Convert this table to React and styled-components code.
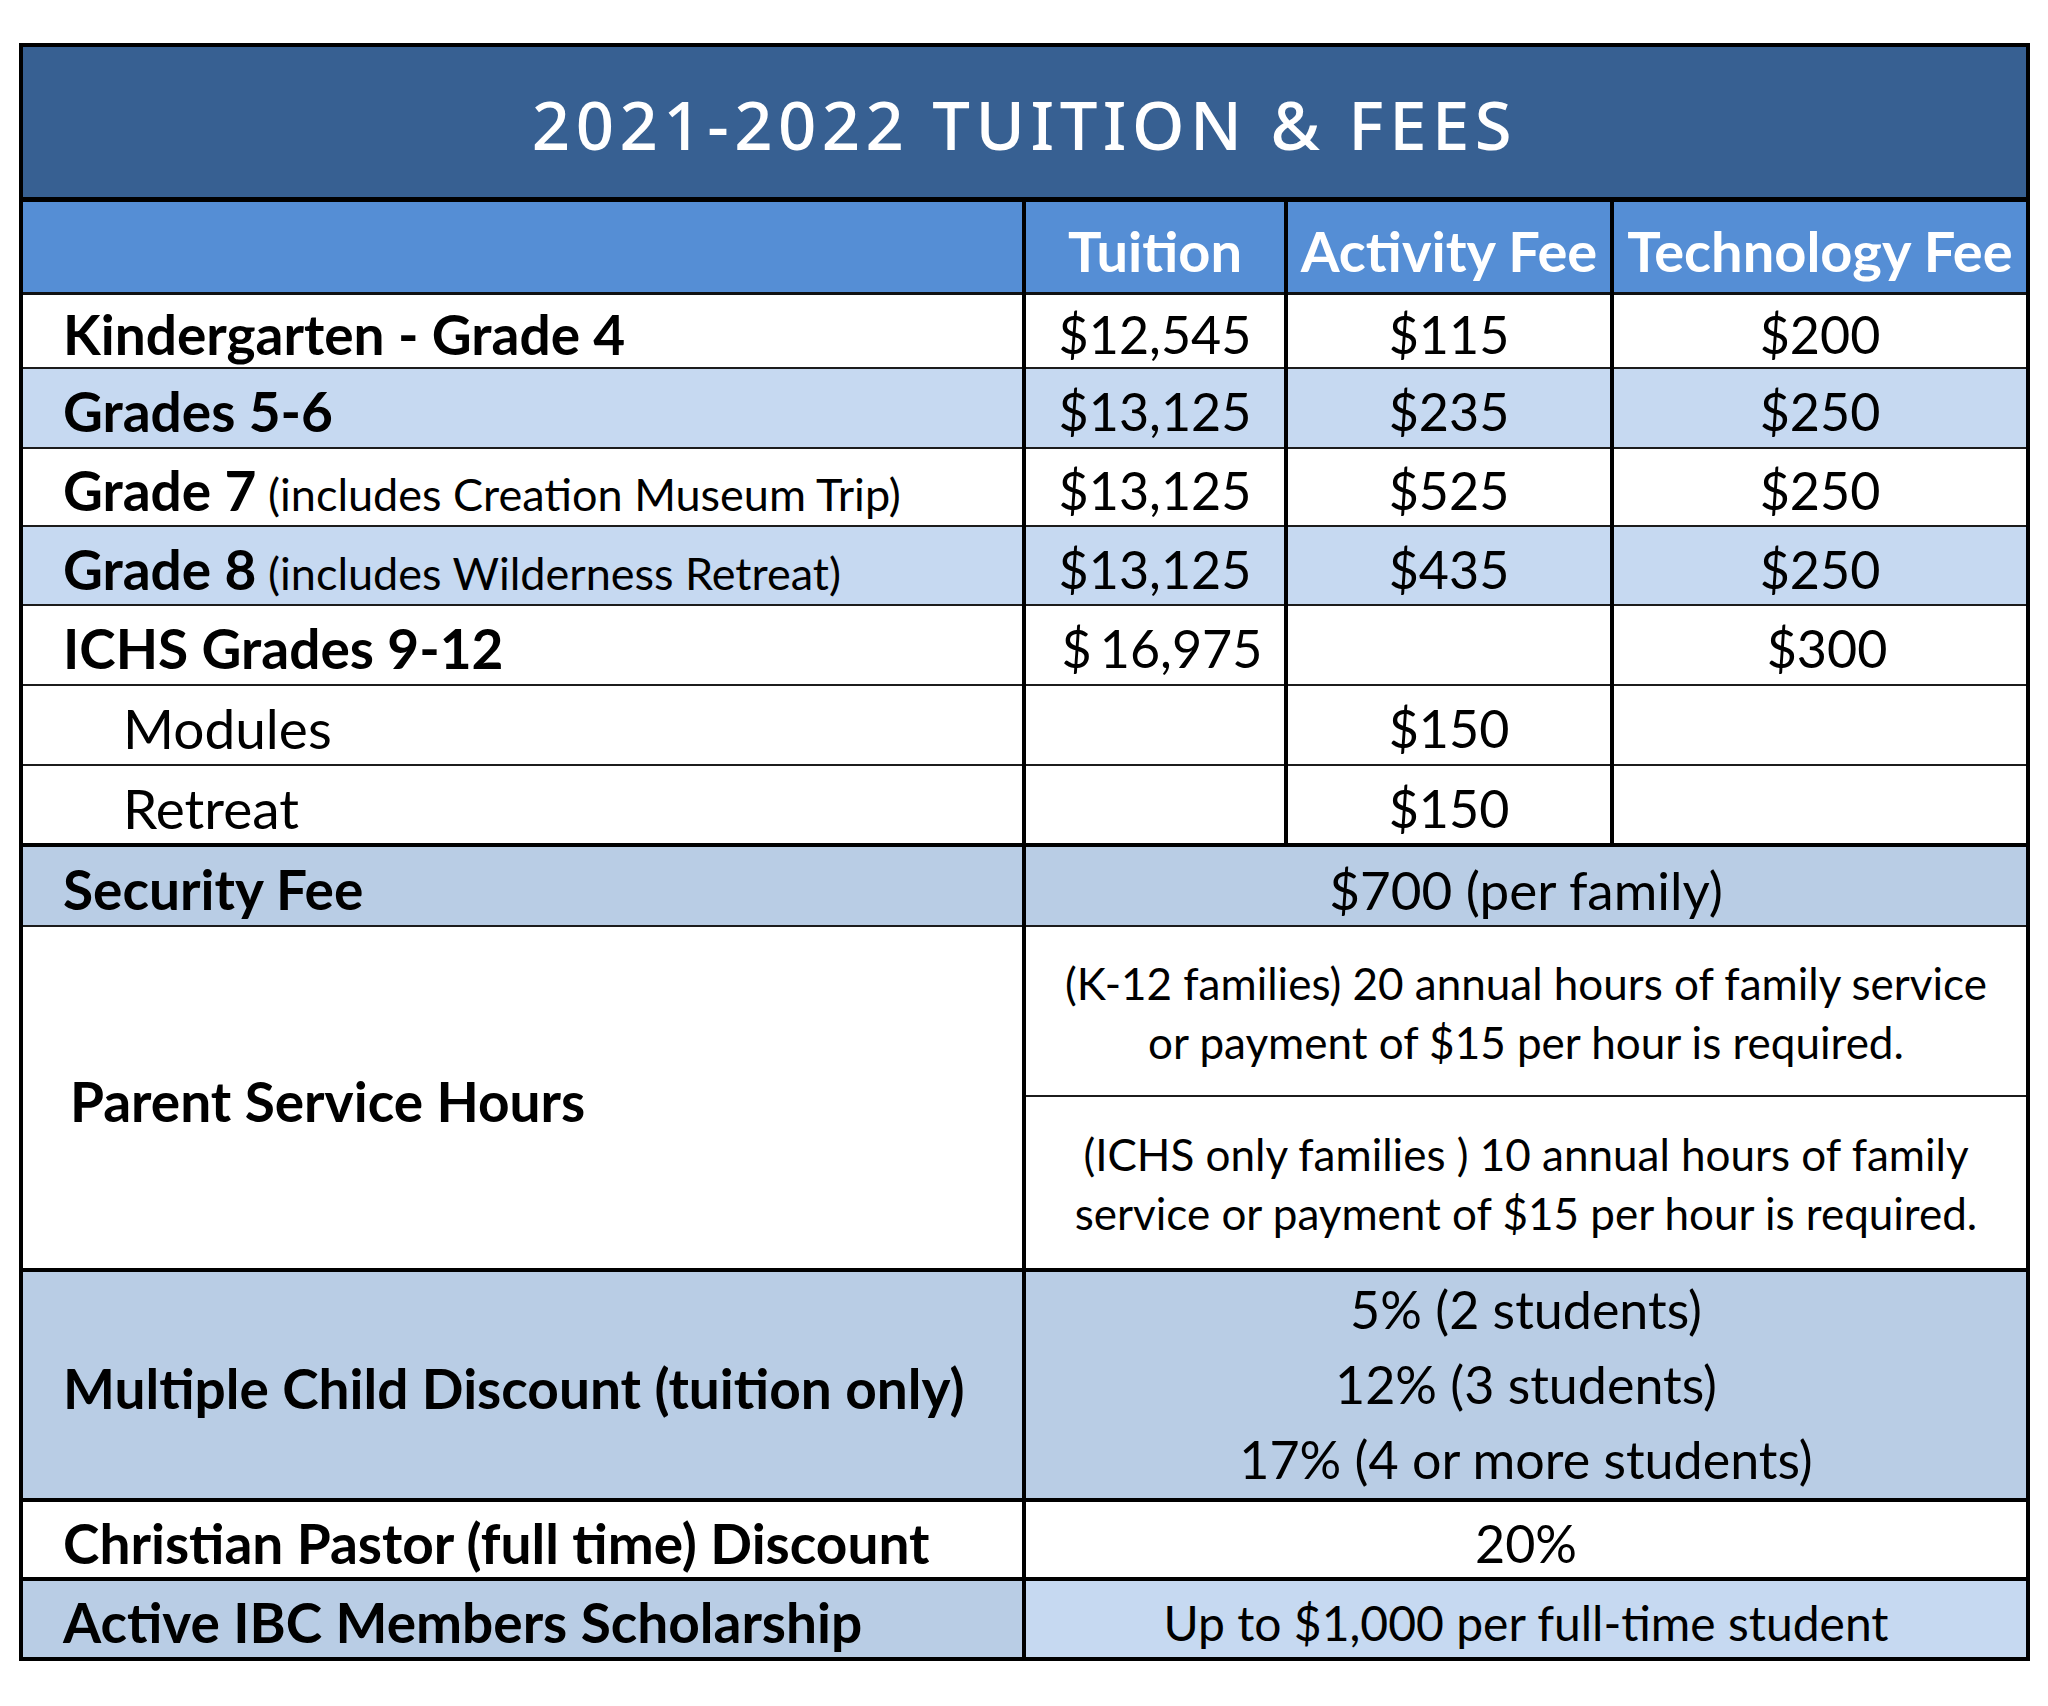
import React from 'react';
import styled, { createGlobalStyle } from 'styled-components';

const GlobalStyle = createGlobalStyle`
  body {
    margin: 0;
    background: #ffffff;
    font-family: Lato, "Open Sans", sans-serif;
    color: #000000;
  }
`;

const rows = [
  { label: 'Kindergarten - Grade 4', tuition: '$12,545', activity: '$115', tech: '$200', height: 70 },
  { label: 'Grades 5-6', tuition: '$13,125', activity: '$235', tech: '$250', height: 80, shade: true },
  { label: 'Grade 7', note: '(includes Creation Museum Trip)', tuition: '$13,125', activity: '$525', tech: '$250', height: 78 },
  { label: 'Grade 8', note: '(includes Wilderness Retreat)', tuition: '$13,125', activity: '$435', tech: '$250', height: 79, shade: true },
  { label: 'ICHS Grades 9-12', tuition: '$16,975', activity: '', tech: '$300', height: 80, odd: true },
  { label: 'Modules', tuition: '', activity: '$150', tech: '', height: 80, sub: true },
  { label: 'Retreat', tuition: '', activity: '$150', tech: '', height: 80, sub: true },
];

const App = () => {
  return (
    <Page>
      <GlobalStyle />
      <Table>
        <colgroup>
          <col style={{ width: 1003 }} />
          <col style={{ width: 262 }} />
          <col style={{ width: 326 }} />
          <col style={{ width: 416 }} />
        </colgroup>
        <tbody>
          <tr>
            <TitleCell colSpan={4}>2021-2022 TUITION &amp; FEES</TitleCell>
          </tr>
          <tr>
            <HeadCell />
            <HeadCell>Tuition</HeadCell>
            <HeadCell>Activity Fee</HeadCell>
            <HeadCell>Technology Fee</HeadCell>
          </tr>
          {rows.map((r) => (
            <Row key={r.label} $height={r.height} $bg={r.shade ? '#c6d9f1' : '#ffffff'}>
              <Label $indent={r.sub}>
                {r.label}
                {r.note && <Note> {r.note}</Note>}
              </Label>
              <Value $shift={r.odd ? 14 : 0}>
                {r.odd ? <><Dollar>$</Dollar>16,975</> : r.tuition}
              </Value>
              <Value>{r.activity}</Value>
              <Value $shift={r.odd ? 14 : 0}>{r.tech}</Value>
            </Row>
          ))}
          <Row $height={81} $bg="#b9cde5" $thick>
            <Label>Security Fee</Label>
            <Value colSpan={3} $size={53}>$700 (per family)</Value>
          </Row>
          <Row $height={170} $bg="#ffffff">
            <Label rowSpan={2} $pad={47}>Parent Service Hours</Label>
            <Small colSpan={3}>
              (K-12 families) 20 annual hours of family service
              <br />
              or payment of $15 per hour is required.
            </Small>
          </Row>
          <Row $height={174} $bg="#ffffff">
            <Small colSpan={3}>
              (ICHS only families ) 10 annual hours of family
              <br />
              service or payment of $15 per hour is required.
            </Small>
          </Row>
          <Row $height={228} $bg="#b9cde5" $thick>
            <Label>Multiple Child Discount (tuition only)</Label>
            <Stack colSpan={3}>
              <div>5% (2 students)</div>
              <div>12% (3 students)</div>
              <div>17% (4 or more students)</div>
            </Stack>
          </Row>
          <Row $height={79} $bg="#ffffff" $thick>
            <Label>Christian Pastor (full time) Discount</Label>
            <Value colSpan={3}>20%</Value>
          </Row>
          <Row $height={80} $bg="#c6d9f1" $thick>
            <Label $bg="#b9cde5">Active IBC Members Scholarship</Label>
            <Value colSpan={3} $size={48}>Up to $1,000 per full-time student</Value>
          </Row>
        </tbody>
      </Table>
    </Page>
  );
};

const Page = styled.div`
  padding: 43px 0 40px 19px;
`;

const Table = styled.table`
  width: 2007px;
  table-layout: fixed;
  border-collapse: collapse;
  border: 4px solid #000000;
`;

const TitleCell = styled.td`
  height: 146px;
  background-color: #376092;
  color: #ffffff;
  text-align: center;
  vertical-align: middle;
  font-family: "Noto Sans", Lato, sans-serif;
  font-weight: 500;
  font-size: 67px;
  letter-spacing: 5.5px;
  white-space: nowrap;
  padding: 4px 0 0 0;
  border-bottom: 5px solid #000000;
`;

const HeadCell = styled.td`
  height: 84px;
  background-color: #558ed5;
  color: #ffffff;
  text-align: center;
  vertical-align: middle;
  font-weight: 700;
  font-size: 56px;
  white-space: nowrap;
  padding: 6px 0 0 0;
  border-left: 4px solid #000000;
  border-bottom: 3px solid #111111;
  &:first-child {
    border-left: none;
  }
`;

const Row = styled.tr`
  height: ${(p) => p.$height}px;
  background-color: ${(p) => p.$bg};
  & > td {
    border-top: ${(p) => (p.$thick ? '4px solid #000000' : '2px solid #1c1c1c')};
  }
`;

const Label = styled.td`
  padding: 6px 0 0 ${(p) => (p.$indent ? 100 : p.$pad || 40)}px;
  vertical-align: middle;
  font-size: 55px;
  white-space: nowrap;
  background-color: ${(p) => p.$bg || 'transparent'};
  font-weight: ${(p) => (p.$indent ? 400 : 700)};
`;

const Note = styled.span`
  font-weight: 400;
  font-size: 45px;
`;

const Value = styled.td`
  text-align: center;
  vertical-align: middle;
  font-size: ${(p) => p.$size || 52}px;
  white-space: nowrap;
  border-left: 4px solid #000000;
  padding: 6px 0 0 ${(p) => p.$shift || 0}px;
`;

const Dollar = styled.span`
  margin-right: 8px;
`;

const Small = styled.td`
  text-align: center;
  vertical-align: middle;
  font-size: 44px;
  line-height: 59px;
  white-space: nowrap;
  border-left: 4px solid #000000;
  padding-top: 4px;
`;

const Stack = styled.td`
  text-align: center;
  vertical-align: middle;
  font-size: 52px;
  line-height: 75px;
  border-left: 4px solid #000000;
  padding-top: 0;
`;

export default App;
